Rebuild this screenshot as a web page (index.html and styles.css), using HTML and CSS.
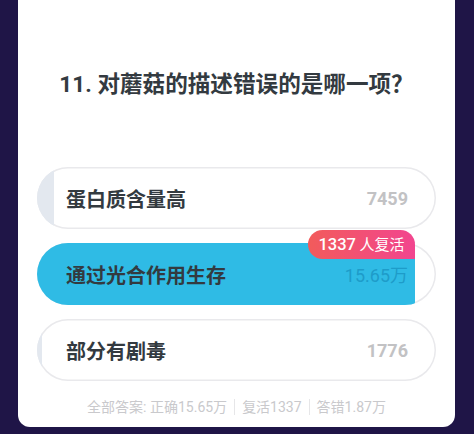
FILE: index.html
```html
<!DOCTYPE html>
<html lang="zh">
<head>
<meta charset="utf-8">
<link rel="stylesheet" href="styles.css">
</head>
<body>
<div class="card">
  <div class="question">11. 对蘑菇的描述错误的是哪一项？</div>
  <div class="options">
    <div class="option">
      <div class="track"><div class="fill grey" style="width:4.3%"></div></div>
      <span class="label">蛋白质含量高</span>
      <span class="count">7459</span>
    </div>
    <div class="option correct">
      <div class="track"><div class="fill blue" style="width:94.8%"></div></div>
      <div class="badge"><span class="num">1337</span> 人复活</div>
      <span class="label">通过光合作用生存</span>
      <span class="count">15.65万</span>
    </div>
    <div class="option">
      <div class="track"><div class="fill grey" style="width:1.2%"></div></div>
      <span class="label">部分有剧毒</span>
      <span class="count">1776</span>
    </div>
  </div>
  <div class="summary">
    <span>全部答案: 正确15.65万</span><span class="sep"></span><span>复活1337</span><span class="sep"></span><span>答错1.87万</span>
  </div>
</div>
</body>
</html>
```
FILE: styles.css
```css
html, body {
  margin: 0;
  padding: 0;
}
body {
  background: #1f1547;
  width: 474px;
  height: 434px;
  overflow: hidden;
  font-family: Roboto, "Noto Sans CJK SC", sans-serif;
}
.card {
  margin: 0 19px 0 18px;
  height: 427px;
  background: #ffffff;
  border-radius: 0 0 12px 12px;
  padding: 0 19px;
  box-sizing: border-box;
  display: flex;
  flex-direction: column;
}
.question {
  margin-top: 70px;
  height: 30px;
  line-height: 30px;
  text-align: center;
  font-size: 22.6px;
  font-weight: 700;
  color: #333a40;
  white-space: nowrap;
}
.options {
  margin-top: 67px;
  display: flex;
  flex-direction: column;
  gap: 14px;
}
.option {
  position: relative;
  height: 62px;
  border-radius: 31px;
  display: flex;
  align-items: center;
  justify-content: space-between;
  padding: 0 28px 0 29px;
}
.track {
  position: absolute;
  inset: 0;
  border-radius: 31px;
  overflow: hidden;
  box-shadow: inset 0 0 0 1.5px #e9e9ec;
}
.fill {
  position: absolute;
  left: 0;
  top: 0;
  bottom: 0;
}
.fill.grey {
  background: #e3e8ef;
}
.fill.blue {
  background: #2fbbe5;
  border-radius: 0 3px 3px 0;
}
.label {
  position: relative;
  font-size: 20px;
  font-weight: 700;
  color: #333a40;
}
.count {
  position: relative;
  font-size: 18px;
  font-weight: 700;
  color: #c2c2c4;
}
.correct .count {
  font-weight: 400;
  color: #1e9cc9;
}
.badge {
  position: absolute;
  right: 21px;
  top: -13px;
  height: 29px;
  width: 107px;
  box-sizing: border-box;
  border-radius: 15px 15px 0 15px;
  background: linear-gradient(90deg, #f25b5b, #f2458f);
  color: #ffffff;
  font-size: 15px;
  line-height: 29px;
  text-align: center;
  white-space: nowrap;
}
.badge .num {
  font-size: 16.5px;
  font-weight: 500;
}
.summary {
  margin-top: 16px;
  display: flex;
  justify-content: center;
  align-items: center;
  font-size: 14px;
  line-height: 20px;
  color: #c9c9cc;
}
.sep {
  width: 1px;
  height: 16px;
  background: #e6e6e8;
  margin: 0 7px;
}
```
